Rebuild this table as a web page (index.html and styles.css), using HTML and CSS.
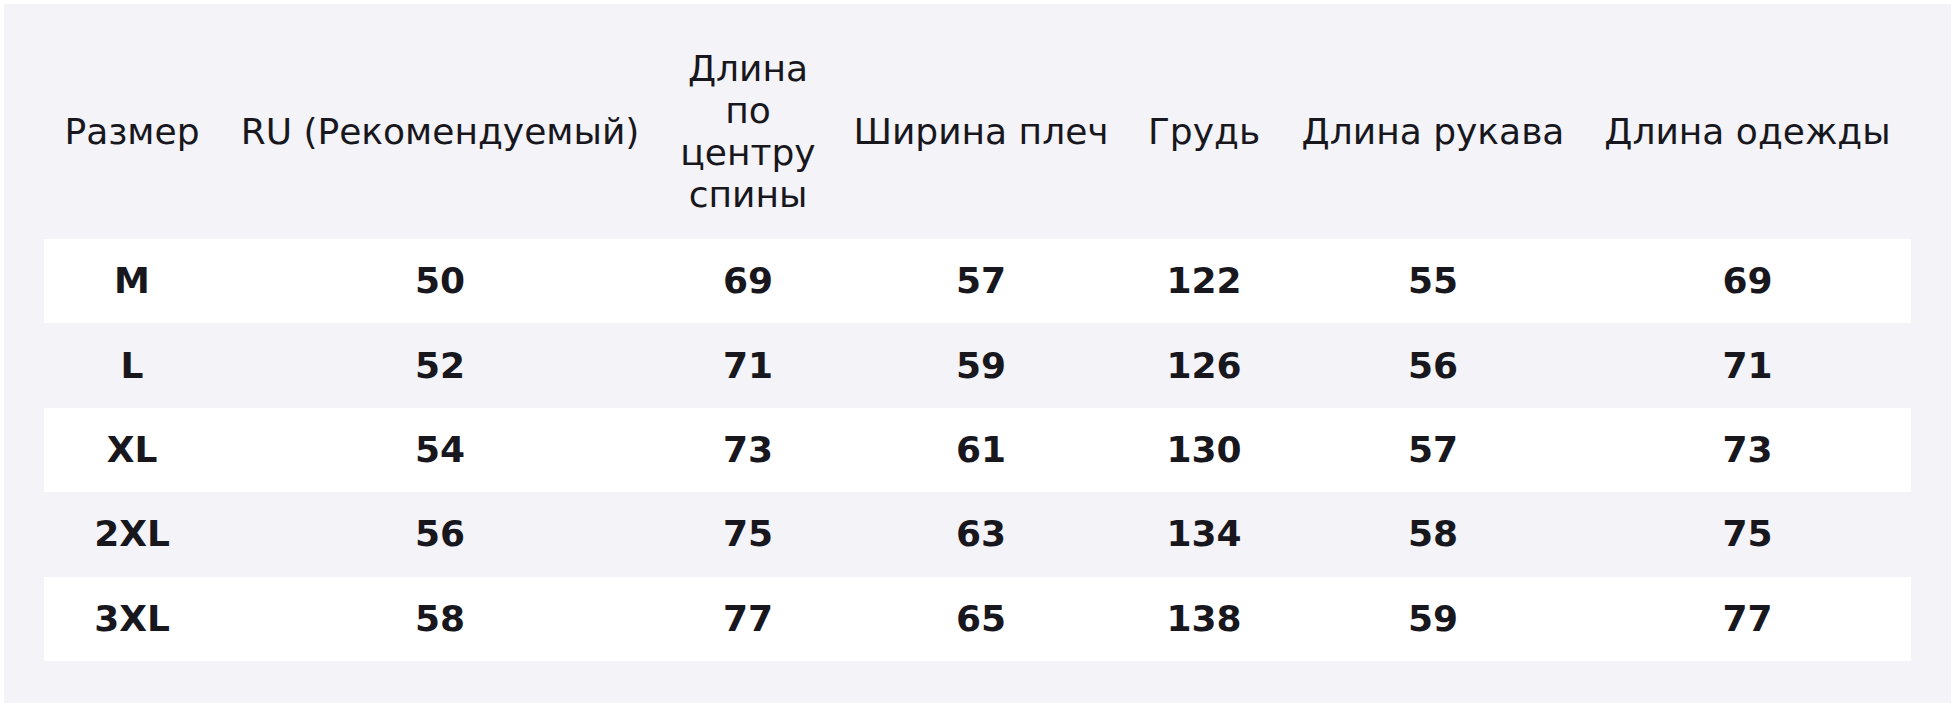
FILE: index.html
```html
<!DOCTYPE html>
<html lang="ru">
<head>
<meta charset="utf-8">
<title>Таблица размеров</title>
<link rel="stylesheet" href="styles.css">
</head>
<body>
<div class="panel">
  <table class="sizes">
    <colgroup>
      <col class="c1"><col class="c2"><col class="c3"><col class="c4"><col class="c5"><col class="c6"><col class="c7">
    </colgroup>
    <thead>
      <tr>
        <th class="one-line">Размер</th>
        <th class="one-line">RU (Рекомендуемый)</th>
        <th class="wrap">Длина по центру спины</th>
        <th class="one-line">Ширина плеч</th>
        <th class="one-line">Грудь</th>
        <th class="one-line">Длина рукава</th>
        <th class="one-line">Длина одежды</th>
      </tr>
    </thead>
    <tbody>
      <tr class="odd"><td>M</td><td>50</td><td>69</td><td>57</td><td>122</td><td>55</td><td>69</td></tr>
      <tr><td>L</td><td>52</td><td>71</td><td>59</td><td>126</td><td>56</td><td>71</td></tr>
      <tr class="odd"><td>XL</td><td>54</td><td>73</td><td>61</td><td>130</td><td>57</td><td>73</td></tr>
      <tr><td>2XL</td><td>56</td><td>75</td><td>63</td><td>134</td><td>58</td><td>75</td></tr>
      <tr class="odd"><td>3XL</td><td>58</td><td>77</td><td>65</td><td>138</td><td>59</td><td>77</td></tr>
    </tbody>
  </table>
</div>
</body>
</html>
```

FILE: styles.css
```css
html, body {
  margin: 0;
  padding: 0;
  background: #ffffff;
}

.panel {
  margin: 4px;
  padding: 40px 40px 42px;
  background: #f3f3f8;
  height: 699px;
  box-sizing: border-box;
}

.sizes {
  width: 100%;
  border-collapse: collapse;
  border-spacing: 0;
  table-layout: fixed;
  font-family: "DejaVu Sans", "Liberation Sans", sans-serif;
  color: #18171d;
  font-size: 36px;
}

.c1 { width: 176px; }
.c2 { width: 440px; }
.c3 { width: 176px; }
.c4 { width: 290px; }
.c5 { width: 156px; }
.c6 { width: 302px; }
.c7 { width: auto; }

.sizes th {
  font-weight: normal;
  text-align: center;
  vertical-align: middle;
  padding: 0 20px 20px;
  height: 195px;
  box-sizing: border-box;
  line-height: 42px;
}

.sizes th.one-line {
  white-space: nowrap;
  padding-left: 0;
  padding-right: 0;
}

.sizes th.wrap {
  padding-left: 19px;
  padding-right: 19px;
}

.sizes td {
  font-weight: bold;
  text-align: center;
  vertical-align: middle;
  padding: 0 20px;
  height: 84.4px;
  box-sizing: border-box;
  line-height: 42px;
}

.sizes tr.odd td {
  background: #ffffff;
}
```
